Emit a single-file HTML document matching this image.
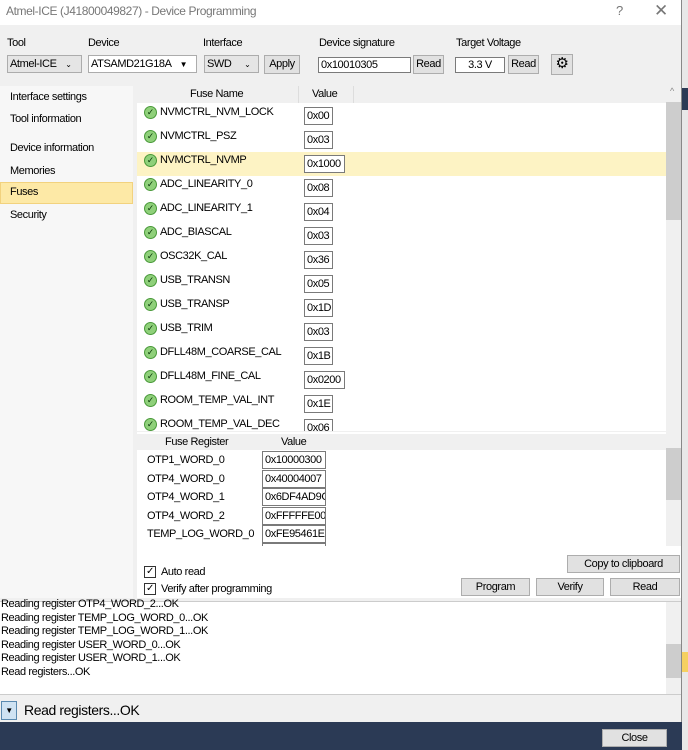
<!DOCTYPE html>
<html><head><meta charset="utf-8"><style>
*{margin:0;padding:0;box-sizing:border-box}
body{width:688px;height:750px;overflow:hidden;background:#f0f0f0;font-family:"Liberation Sans",sans-serif;font-size:11px;color:#000;position:relative;letter-spacing:-0.4px}
.a{position:absolute}
.box{position:absolute;background:#fff;border:1px solid #7a7a7a;padding-left:2px;line-height:16px;height:18px;white-space:nowrap;overflow:hidden}
.btn{position:absolute;background:#e1e1e1;border:1px solid #adadad;text-align:center;line-height:16px}
.chk{position:absolute;width:13px;height:13px;border-radius:50%;background:#8fd07a;border:1px solid #4a9a3a;color:#0a3a0a;font-size:9px;line-height:11px;text-align:center;letter-spacing:0}
.log div{height:13.6px;line-height:13.6px}
</style></head><body>
<div class="a" style="left:0;top:0;width:681px;height:25px;background:#fff"></div>
<div class="a" style="left:6px;top:4px;color:#777;font-size:12px">Atmel-ICE (J41800049827) - Device Programming</div>
<div class="a" style="left:616px;top:3px;color:#777;font-size:13px">?</div>
<div class="a" style="left:654px;top:1px;color:#777;font-size:17px">✕</div>
<div class="a" style="left:681px;top:0;width:1px;height:750px;background:#888"></div>
<div class="a" style="left:682px;top:0;width:6px;height:750px;background:#e8e8e8"></div>
<div class="a" style="left:682px;top:88px;width:6px;height:22px;background:#2b3a55"></div>
<div class="a" style="left:682px;top:652px;width:6px;height:20px;background:#f5d060"></div>

<div class="a" style="left:7px;top:37px">Tool</div>
<div class="a" style="left:88px;top:37px">Device</div>
<div class="a" style="left:203px;top:37px">Interface</div>
<div class="a" style="left:319px;top:37px">Device signature</div>
<div class="a" style="left:456px;top:37px">Target Voltage</div>
<div class="box" style="left:7px;top:55px;width:75px;background:#e5e5e5;border-color:#acacac">Atmel-ICE <span style="font-size:8px;margin-left:6px">⌄</span></div>
<div class="box" style="left:88px;top:55px;width:109px;border-color:#acacac">ATSAMD21G18A <span style="font-size:8px;margin-left:6px">▼</span></div>
<div class="box" style="left:204px;top:55px;width:55px;background:#e5e5e5;border-color:#acacac">SWD <span style="font-size:8px;margin-left:10px">⌄</span></div>
<div class="btn" style="left:264px;top:55px;width:36px;height:19px">Apply</div>
<div class="box" style="left:318px;top:57px;width:93px;height:16px;line-height:14px">0x10010305</div>
<div class="btn" style="left:413px;top:55px;width:31px;height:19px">Read</div>
<div class="box" style="left:455px;top:57px;width:50px;height:16px;line-height:14px;text-align:center;padding:0">3.3 V</div>
<div class="btn" style="left:508px;top:55px;width:31px;height:19px">Read</div>
<div class="btn" style="left:551px;top:54px;width:22px;height:21px;font-size:15px;line-height:18px">⚙</div>

<div class="a" style="left:0;top:86px;width:133px;height:512px;background:#f7f7f7"></div>
<div class="a" style="left:10px;top:91px">Interface settings</div>
<div class="a" style="left:10px;top:113px">Tool information</div>
<div class="a" style="left:10px;top:142px">Device information</div>
<div class="a" style="left:10px;top:165px">Memories</div>
<div class="a" style="left:0;top:182px;width:133px;height:22px;background:#fde9a6;border:1px solid #f2d27e"></div>
<div class="a" style="left:10px;top:186px">Fuses</div>
<div class="a" style="left:10px;top:209px">Security</div>

<div class="a" style="left:137px;top:86px;width:529px;height:345px;background:#fff;overflow:hidden">
<div class="a" style="left:0;top:0;width:529px;height:17px;background:#f0f0f0"></div>
<div class="a" style="left:161px;top:0;width:1px;height:17px;background:#ddd"></div>
<div class="a" style="left:216px;top:0;width:1px;height:17px;background:#ddd"></div>
<div class="a" style="left:53px;top:2px">Fuse Name</div>
<div class="a" style="left:175px;top:2px">Value</div>
<div class="a" style="left:0;top:66px;width:529px;height:24px;background:#fdf3c4"></div>
<div id="fuses"></div>
</div>
<div class="a" style="left:666px;top:86px;width:15px;height:345px;background:#f0f0f0"></div>
<div class="a" style="left:666px;top:102px;width:15px;height:118px;background:#cdcdcd"></div>
<div class="a" style="left:670px;top:86px;font-size:9px;color:#888">^</div>

<div class="a" style="left:137px;top:432px;width:529px;height:114px;background:#fff;overflow:hidden">
<div class="a" style="left:0;top:2px;width:529px;height:16px;background:#f0f0f0"></div>
<div class="a" style="left:28px;top:4px">Fuse Register</div>
<div class="a" style="left:144px;top:4px">Value</div>
<div id="regs"></div>
</div>
<div class="a" style="left:666px;top:432px;width:15px;height:114px;background:#f0f0f0"></div>
<div class="a" style="left:666px;top:448px;width:15px;height:52px;background:#cdcdcd"></div>

<div class="a" style="left:137px;top:546px;width:544px;height:52px;background:#fff"></div>
<div class="a" style="left:144px;top:566px;width:12px;height:12px;border:1px solid #333;font-size:10px;line-height:10px;text-align:center">✓</div>
<div class="a" style="left:161px;top:566px">Auto read</div>
<div class="a" style="left:144px;top:583px;width:12px;height:12px;border:1px solid #333;font-size:10px;line-height:10px;text-align:center">✓</div>
<div class="a" style="left:161px;top:583px">Verify after programming</div>
<div class="btn" style="left:567px;top:555px;width:113px;height:18px">Copy to clipboard</div>
<div class="btn" style="left:461px;top:578px;width:69px;height:18px">Program</div>
<div class="btn" style="left:536px;top:578px;width:68px;height:18px">Verify</div>
<div class="btn" style="left:610px;top:578px;width:70px;height:18px">Read</div>

<div class="a" style="left:0;top:601px;width:681px;height:94px;background:#fff;border-top:1px solid #ccc;border-bottom:1px solid #ccc"></div>
<div class="a" style="left:666px;top:602px;width:15px;height:92px;background:#f0f0f0"></div>
<div class="a" style="left:666px;top:644px;width:15px;height:34px;background:#cdcdcd"></div>
<div class="a log" style="left:1px;top:598px;width:600px;height:97px;overflow:hidden">
<div>Reading register OTP4_WORD_2...OK</div>
<div>Reading register TEMP_LOG_WORD_0...OK</div>
<div>Reading register TEMP_LOG_WORD_1...OK</div>
<div>Reading register USER_WORD_0...OK</div>
<div>Reading register USER_WORD_1...OK</div>
<div>Read registers...OK</div>
</div>
<div class="a" style="left:1px;top:701px;width:16px;height:19px;background:#cfe3f3;border:1px solid #5a8ab0;font-size:8px;text-align:center;line-height:17px">▼</div>
<div class="a" style="left:24px;top:702px;font-size:14px">Read registers...OK</div>

<div class="a" style="left:0;top:722px;width:682px;height:28px;background:#2b3a55"></div>
<div class="btn" style="left:602px;top:729px;width:65px;height:18px">Close</div>

<script>
var f=[["NVMCTRL_NVM_LOCK","0x00"],["NVMCTRL_PSZ","0x03"],["NVMCTRL_NVMP","0x1000"],["ADC_LINEARITY_0","0x08"],["ADC_LINEARITY_1","0x04"],["ADC_BIASCAL","0x03"],["OSC32K_CAL","0x36"],["USB_TRANSN","0x05"],["USB_TRANSP","0x1D"],["USB_TRIM","0x03"],["DFLL48M_COARSE_CAL","0x1B"],["DFLL48M_FINE_CAL","0x0200"],["ROOM_TEMP_VAL_INT","0x1E"],["ROOM_TEMP_VAL_DEC","0x06"]];
var h="";
f.forEach(function(r,i){var y=20+i*24;
h+='<div class="chk" style="left:7px;top:'+y+'px">✓</div>';
h+='<div class="a" style="left:23px;top:'+y+'px">'+r[0]+'</div>';
h+='<div class="box" style="left:167px;top:'+(y+1)+'px;width:'+(r[1].length*5.8+6)+'px">'+r[1]+'</div>';});
document.getElementById("fuses").innerHTML=h;
var g=[["OTP1_WORD_0","0x10000300"],["OTP4_WORD_0","0x40004007"],["OTP4_WORD_1","0x6DF4AD9C"],["OTP4_WORD_2","0xFFFFFE00"],["TEMP_LOG_WORD_0","0xFE95461E"]];
h="";
g.forEach(function(r,i){var y=22+i*18.5;h+='<div class="a" style="left:10px;top:'+y+'px">'+r[0]+'</div><div class="box" style="left:125px;top:'+(y-3)+'px;width:64px">'+r[1]+'</div>';});
h+='<div class="box" style="left:125px;top:111px;width:64px"></div>';
document.getElementById("regs").innerHTML=h;
</script>
</body></html>
